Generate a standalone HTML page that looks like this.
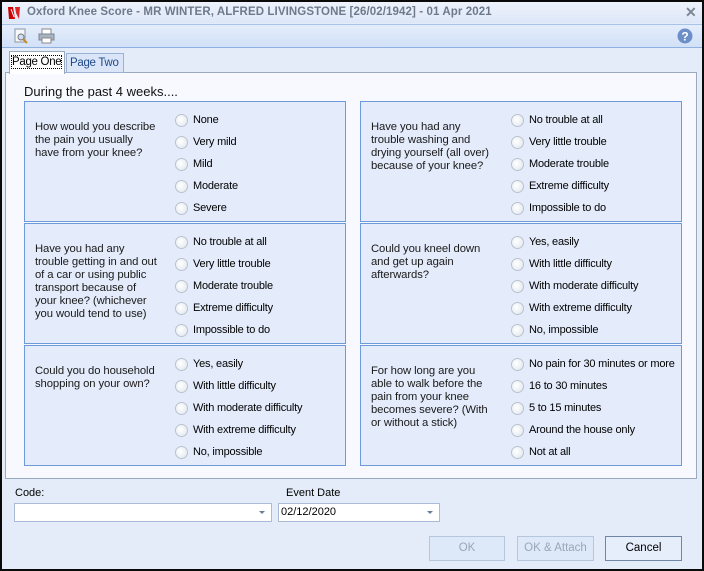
<!DOCTYPE html>
<html><head><meta charset="utf-8"><style>
*{margin:0;padding:0;box-sizing:border-box}
body{width:704px;height:571px;overflow:hidden;background:#0a0a0a;font-family:"Liberation Sans",sans-serif;font-size:11px;color:#000;position:relative}
.win{position:absolute;left:2px;top:2px;width:700px;height:567px;background:#e4ecfa}
.title{position:absolute;left:0;top:0;width:700px;height:21px;background:linear-gradient(#eef3fc,#dde7f8);color:#6e7a8c;font-weight:bold;font-size:11.5px;line-height:21px;padding-left:25px;letter-spacing:.1px}
.tb{position:absolute;left:0;top:22px;width:700px;height:24px;background:linear-gradient(#e4edfb,#d2e1f7);border-top:1px solid #a8c3ea;border-bottom:1px solid #8fb1e2}
.panel{position:absolute;left:3px;top:70px;width:692px;height:407px;background:#f7f9fe;border:1px solid #9aa9be}
.tab{position:absolute;top:49px;height:22px;font-size:11.5px;line-height:20px;padding:0 2px;letter-spacing:-.3px}
.grp{position:absolute;width:322px;height:121px;background:#e4ecfb;border:1px solid #6d9ad8}
.q{position:absolute;left:10px;top:19px;line-height:13px;color:#1a1a1a;font-size:11.3px;white-space:nowrap;letter-spacing:-.1px}
.r{position:absolute;height:14px;line-height:14px;white-space:nowrap;letter-spacing:-.2px}
.r:before{content:"";position:absolute;left:-18px;top:1px;width:11px;height:11px;border-radius:50%;border:1px solid #b9c3cf;background:radial-gradient(circle at 40% 40%,#fff,#dfe5ec)}
.abs{position:absolute}
.combo{position:absolute;height:19px;background:#fff;border:1px solid #a9bbd6;line-height:17px;padding-left:2px}
.combo i{position:absolute;right:6px;top:7px;border-left:3px solid transparent;border-right:3px solid transparent;border-top:3px solid #6b7d95}
.btn{position:absolute;top:534px;height:25px;border:1px solid #b5c6dd;background:#dde8f8;color:#9aa6b6;text-align:center;line-height:23px;font-size:11.5px}
</style></head><body><div class="win">
<div class="title">Oxford Knee Score - MR WINTER, ALFRED LIVINGSTONE [26/02/1942] - 01 Apr 2021</div>
<svg class="abs" style="left:4px;top:3px" width="16" height="16"><path d="M2 2 L7 2 L9 14 L3 14Z" fill="#c00"/><path d="M9 2 L14 2 L13 14 L10 8Z" fill="#d22"/><path d="M5 4 L8 12" stroke="#fff" stroke-width="1"/></svg>
<div class="abs" style="left:683px;top:2px;color:#7d8796;font-size:14px;font-weight:bold">✕</div>
<div class="tb"></div>
<svg class="abs" style="left:11px;top:26px" width="16" height="16"><rect x="2" y="1" width="10" height="13" fill="#f5f7fa" stroke="#8a96a6"/><circle cx="8" cy="9" r="3" fill="#cfe0f5" stroke="#777"/><path d="M10 11 L14 15" stroke="#c68a2a" stroke-width="2"/></svg>
<svg class="abs" style="left:36px;top:26px" width="17" height="16"><rect x="4" y="1" width="9" height="5" fill="#fff" stroke="#888"/><rect x="1" y="6" width="15" height="6" fill="#a9b3c0" stroke="#7a8594"/><rect x="4" y="10" width="9" height="5" fill="#fff" stroke="#888"/></svg>
<svg class="abs" style="left:675px;top:26px" width="16" height="16"><circle cx="8" cy="8" r="7.5" fill="#6d8fc9"/><text x="8" y="12.5" font-family="Liberation Sans" font-size="12" font-weight="bold" fill="#fff" text-anchor="middle">?</text></svg>
<div class="panel"></div>
<div class="tab" style="left:7px;width:56px;height:23px;background:#fff;border:1px solid #9aa9be;border-bottom:none;z-index:2"><span style="outline:1px dotted #000">Page One</span></div>
<div class="tab" style="left:64px;width:58px;top:51px;height:20px;background:#dae5f8;border:1px solid #9ab2d6;color:#1f4a8a;line-height:18px;padding-left:3px">Page Two</div>
<div class="abs" style="left:22px;top:82px;font-size:13px;color:#111">During the past 4 weeks....</div>

<div class="grp" style="left:22px;top:99px"><div class="q">How would you describe<br>the pain you usually<br>have from your knee?</div>
<div class="r" style="left:168px;top:11px">None</div><div class="r" style="left:168px;top:33px">Very mild</div><div class="r" style="left:168px;top:55px">Mild</div><div class="r" style="left:168px;top:77px">Moderate</div><div class="r" style="left:168px;top:99px">Severe</div></div>

<div class="grp" style="left:358px;top:99px"><div class="q">Have you had any<br>trouble washing and<br>drying yourself (all over)<br>because of your knee?</div>
<div class="r" style="left:168px;top:11px">No trouble at all</div><div class="r" style="left:168px;top:33px">Very little trouble</div><div class="r" style="left:168px;top:55px">Moderate trouble</div><div class="r" style="left:168px;top:77px">Extreme difficulty</div><div class="r" style="left:168px;top:99px">Impossible to do</div></div>

<div class="grp" style="left:22px;top:221px"><div class="q">Have you had any<br>trouble getting in and out<br>of a car or using public<br>transport because of<br>your knee? (whichever<br>you would tend to use)</div>
<div class="r" style="left:168px;top:11px">No trouble at all</div><div class="r" style="left:168px;top:33px">Very little trouble</div><div class="r" style="left:168px;top:55px">Moderate trouble</div><div class="r" style="left:168px;top:77px">Extreme difficulty</div><div class="r" style="left:168px;top:99px">Impossible to do</div></div>

<div class="grp" style="left:358px;top:221px"><div class="q">Could you kneel down<br>and get up again<br>afterwards?</div>
<div class="r" style="left:168px;top:11px">Yes, easily</div><div class="r" style="left:168px;top:33px">With little difficulty</div><div class="r" style="left:168px;top:55px">With moderate difficulty</div><div class="r" style="left:168px;top:77px">With extreme difficulty</div><div class="r" style="left:168px;top:99px">No, impossible</div></div>

<div class="grp" style="left:22px;top:343px"><div class="q">Could you do household<br>shopping on your own?</div>
<div class="r" style="left:168px;top:11px">Yes, easily</div><div class="r" style="left:168px;top:33px">With little difficulty</div><div class="r" style="left:168px;top:55px">With moderate difficulty</div><div class="r" style="left:168px;top:77px">With extreme difficulty</div><div class="r" style="left:168px;top:99px">No, impossible</div></div>

<div class="grp" style="left:358px;top:343px"><div class="q">For how long are you<br>able to walk before the<br>pain from your knee<br>becomes severe? (With<br>or without a stick)</div>
<div class="r" style="left:168px;top:11px">No pain for 30 minutes or more</div><div class="r" style="left:168px;top:33px">16 to 30 minutes</div><div class="r" style="left:168px;top:55px">5 to 15 minutes</div><div class="r" style="left:168px;top:77px">Around the house only</div><div class="r" style="left:168px;top:99px">Not at all</div></div>

<div class="abs" style="left:13px;top:485px">Code:</div>
<div class="abs" style="left:284px;top:485px">Event Date</div>
<div class="combo" style="left:12px;top:501px;width:258px"><i></i></div>
<div class="combo" style="left:276px;top:501px;width:162px">02/12/2020<i></i></div>
<div class="btn" style="left:427px;width:76px">OK</div>
<div class="btn" style="left:515px;width:77px">OK &amp; Attach</div>
<div class="btn" style="left:603px;width:77px;border-color:#6f86a8;background:#e6eefb;color:#000">Cancel</div>
</div></body></html>
